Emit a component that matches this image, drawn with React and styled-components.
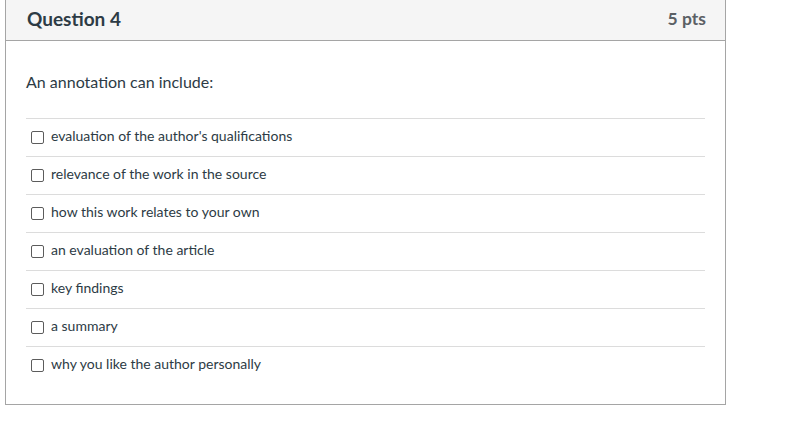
import styled, { createGlobalStyle } from "styled-components";

const GlobalStyle = createGlobalStyle`
  body {
    margin: 0;
    background: #fff;
    font-family: Lato, "Liberation Sans", sans-serif;
    color: #2d3b45;
  }
`;

const Page = styled.div`
  padding: 0 65px 0 5px;
`;

const Card = styled.div`
  width: 721px;
  margin-top: -1px;
  border: 1px solid #a5a5a5;
  box-sizing: border-box;
  background: #fff;
`;

const Header = styled.div`
  height: 41px;
  box-sizing: border-box;
  background: #f5f5f5;
  border-bottom: 1px solid #a5a5a5;
  display: flex;
  justify-content: space-between;
  align-items: center;
  padding: 0 19px 4px 21px;
`;

const Title = styled.h2`
  margin: 0;
  font-size: 19px;
  font-weight: 700;
  color: #2d3b45;
`;

const Points = styled.span`
  font-size: 17.5px;
  font-weight: 700;
  color: #5b6065;
`;

const Body = styled.div`
  padding: 31px 20px 20px 20px;
`;

const Prompt = styled.p`
  margin: 0 0 26px 0;
  font-size: 16px;
  line-height: 20px;
`;

const Answers = styled.div`
  display: flex;
  flex-direction: column;
`;

const Answer = styled.label`
  height: 38px;
  box-sizing: border-box;
  border-top: 1px solid #dcdcdc;
  display: flex;
  align-items: center;
  padding: 0 0 5px 5px;
  font-size: 14px;
  color: #2d3b45;
`;

const Box = styled.span`
  width: 13px;
  height: 13px;
  box-sizing: border-box;
  border: 1px solid #5c5c5c;
  border-radius: 2px;
  margin-right: 7px;
  margin-top: 4px;
  flex-shrink: 0;
`;

const answers = [
  "evaluation of the author's qualifications",
  "relevance of the work in the source",
  "how this work relates to your own",
  "an evaluation of the article",
  "key findings",
  "a summary",
  "why you like the author personally",
];

export default function App() {
  return (
    <Page>
      <GlobalStyle />
      <Card>
        <Header>
          <Title>Question 4</Title>
          <Points>5 pts</Points>
        </Header>
        <Body>
          <Prompt>An annotation can include:</Prompt>
          <Answers>
            {answers.map((a) => (
              <Answer key={a}>
                <Box />
                {a}
              </Answer>
            ))}
          </Answers>
        </Body>
      </Card>
    </Page>
  );
}
